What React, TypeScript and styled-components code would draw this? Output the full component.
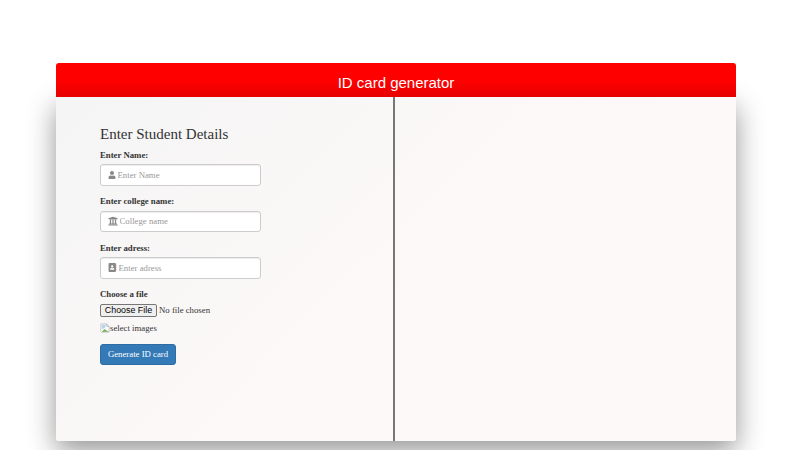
import React, { FC } from 'react';
import styled, { createGlobalStyle } from 'styled-components';
import { FaAddressBook, FaUniversity, FaUser } from 'react-icons/fa';

const GlobalStyle = createGlobalStyle`
  * {
    box-sizing: border-box;
  }

  html,
  body {
    margin: 0;
    height: 100%;
    overflow: hidden;
    background-color: #fff;
    font-family: 'Liberation Serif', 'Times New Roman', serif;
    color: #333;
  }
`;

const App: FC = () => {
  return (
    <Page>
      <GlobalStyle />
      <Card>
        <CardHeader>ID card generator</CardHeader>
        <CardBody>
          <FormPanel>
            <Title>Enter Student Details</Title>
            <Field>
              <FieldLabel>Enter Name:</FieldLabel>
              <InputBox>
                <FaUser size={8} />
                <StyledInput type="text" placeholder="Enter Name" />
              </InputBox>
            </Field>
            <Field>
              <FieldLabel>Enter college name:</FieldLabel>
              <InputBox>
                <FaUniversity size={10} />
                <StyledInput type="text" placeholder="College name" />
              </InputBox>
            </Field>
            <Field>
              <FieldLabel>Enter adress:</FieldLabel>
              <InputBox>
                <FaAddressBook size={9} />
                <StyledInput type="text" placeholder="Enter adress" />
              </InputBox>
            </Field>
            <FieldLabel>Choose a file</FieldLabel>
            <FileRow>
              <FileButton type="button">Choose File</FileButton>
              <span>No file chosen</span>
            </FileRow>
            <ImageAlt>
              <svg width="10" height="10" viewBox="0 0 16 16">
                <path d="M1.5 1.5h9l4 4v9h-13z" fill="#fff" stroke="#a3a3a3" />
                <path d="M10.5 1.5v4h4" fill="#e4e4e4" stroke="#a3a3a3" />
                <path d="M3 3h6v6H3z" fill="#b9d0f2" />
                <path d="M3 13l3-4 3 2 4 2v1H3z" fill="#6fae55" />
                <path d="M1 15L11 5" stroke="#fff" strokeWidth="1.5" />
              </svg>
              <span>select images</span>
            </ImageAlt>
            <GenerateButton type="button">Generate ID card</GenerateButton>
          </FormPanel>
          <PreviewPanel />
        </CardBody>
      </Card>
    </Page>
  );
};

const Page = styled.div`
  width: 800px;
  height: 450px;
  padding: 63px 64px 0 56px;
`;

const Card = styled.div`
  width: 680px;
  height: 378px;
  display: flex;
  flex-direction: column;
`;

const CardHeader = styled.div`
  position: relative;
  z-index: 1;
  height: 34px;
  display: flex;
  align-items: center;
  justify-content: center;
  padding-top: 5px;
  color: #fff;
  font-family: 'Liberation Sans', Arial, sans-serif;
  font-size: 15px;
  border-radius: 3px 3px 0 0;
  background: linear-gradient(to bottom, #ff0000 50%, #e60000 100%);
`;

const CardBody = styled.div`
  flex: 1;
  display: flex;
  border-radius: 0 0 3px 3px;
  background: linear-gradient(135deg, #f5f5f5 0%, #fdf9f8 60%, #fdf9f8 100%);
  box-shadow: 0 10px 28px rgba(0, 0, 0, 0.42);
`;

const FormPanel = styled.div`
  width: 339px;
  padding: 28.5px 0 0 44px;
  border-right: 2px solid #777;
  font-size: 8.75px;
`;

const PreviewPanel = styled.div`
  flex: 1;
`;

const Title = styled.h3`
  margin: 0 0 6.5px;
  font-size: 15px;
  font-weight: 500;
  line-height: 16.5px;
`;

const Field = styled.div`
  margin-bottom: 9.6px;
`;

const FieldLabel = styled.label`
  display: block;
  margin-bottom: 3px;
  font-size: 8.75px;
  font-weight: 700;
  line-height: 12.5px;
`;

const InputBox = styled.div`
  width: 161px;
  height: 21.5px;
  display: flex;
  align-items: center;
  gap: 1.5px;
  padding: 0 7px;
  color: #888;
  background-color: #fff;
  border: 1px solid #ccc;
  border-radius: 3px;
  box-shadow: inset 0 1px 1px rgba(0, 0, 0, 0.075);
`;

const StyledInput = styled.input`
  flex: 1;
  min-width: 0;
  padding: 0;
  border: 0;
  outline: 0;
  background: transparent;
  font-family: inherit;
  font-size: 8.75px;

  &::placeholder {
    color: #999;
  }
`;

const FileRow = styled.div`
  display: flex;
  align-items: center;
  gap: 2px;
  color: #333;
`;

const FileButton = styled.button`
  width: 57px;
  height: 13px;
  padding: 0;
  font-family: 'Liberation Sans', Arial, sans-serif;
  font-size: 8.9px;
  color: #000;
  background-color: #efefef;
  border: 1px solid #767676;
  border-radius: 2px;
`;

const ImageAlt = styled.div`
  display: flex;
  align-items: center;
  height: 10px;
  margin-top: 6px;
  margin-bottom: 11px;
`;

const GenerateButton = styled.button`
  display: block;
  width: 76px;
  height: 21px;
  padding: 0;
  color: #fff;
  font-family: inherit;
  font-size: 8.75px;
  background-color: #337ab7;
  border: 1px solid #2e6da4;
  border-radius: 3px;
`;

export default App;
